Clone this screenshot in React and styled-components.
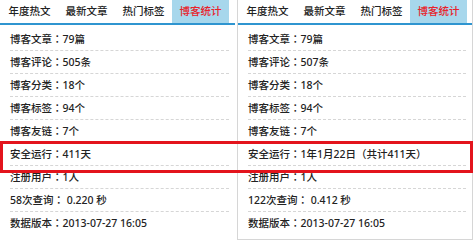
import styled, { createGlobalStyle } from 'styled-components';

const GlobalStyle = createGlobalStyle`
  html, body {
    margin: 0;
    padding: 0;
    background: #fff;
  }
  body {
    font-family: "Noto Sans", "Noto Sans CJK SC", sans-serif;
    color: #222;
  }
`;

const tabs = ['年度热文', '最新文章', '热门标签', '博客统计'];

const leftStats = [
  ['博客文章', '79篇'],
  ['博客评论', '505条'],
  ['博客分类', '18个'],
  ['博客标签', '94个'],
  ['博客友链', '7个'],
  ['安全运行', '411天'],
  ['注册用户', '1人'],
  ['58次查询', ' 0.220 秒'],
  ['数据版本', '2013-07-27 16:05'],
];

const rightStats = [
  ['博客文章', '79篇'],
  ['博客评论', '507条'],
  ['博客分类', '18个'],
  ['博客标签', '94个'],
  ['博客友链', '7个'],
  ['安全运行', '1年1月22日（共计411天）'],
  ['注册用户', '1人'],
  ['122次查询', ' 0.412 秒'],
  ['数据版本', '2013-07-27 16:05'],
];

const StatsWidget = ({ items, bordered }) => (
  <Panel $bordered={bordered}>
    <TabBar>
      {tabs.map((t, i) => (
        <Tab key={t} $active={i === tabs.length - 1}>
          {t}
        </Tab>
      ))}
    </TabBar>
    <StatList>
      {items.map(([label, value], i) => (
        <StatRow key={label} $last={i === items.length - 1}>
          {label}
          <Colon>：</Colon>
          {value}
        </StatRow>
      ))}
    </StatList>
  </Panel>
);

const App = () => {
  return (
    <Page>
      <GlobalStyle />
      <StatsWidget items={leftStats} />
      <StatsWidget items={rightStats} bordered />
      {/* red annotation frame around the uptime row */}
      <Highlight />
    </Page>
  );
};

const Page = styled.div`
  position: relative;
  width: 474px;
  height: 242px;
  overflow: hidden;
  display: flex;
  align-items: flex-start;
  gap: 2px;
`;

const Panel = styled.section`
  width: ${(p) => (p.$bordered ? '234px' : '235px')};
  border: ${(p) => (p.$bordered ? '1px solid #d6d6d6' : 'none')};
  border-top: none;
  background: #fff;
`;

const TabBar = styled.div`
  display: flex;
  height: 23px;
  padding-left: 1px;
  border-bottom: 2px solid #2f95d0;
`;

const Tab = styled.div`
  padding: 0 7.5px;
  line-height: 23px;
  font-size: 10.5px;
  font-weight: 500;
  white-space: nowrap;
  color: ${(p) => (p.$active ? '#e8232b' : '#222')};
  background: ${(p) => (p.$active ? '#a7d7ec' : 'transparent')};
`;

const StatList = styled.ul`
  list-style: none;
  margin: 0;
  padding: 3px 6px 4px 10px;
`;

const StatRow = styled.li`
  height: 22px;
  line-height: 22px;
  font-size: 10.5px;
  font-weight: 500;
  white-space: pre;
  color: #222;
  border-bottom: ${(p) => (p.$last ? '1px solid transparent' : '1px dashed #d6d6d6')};
`;

const Colon = styled.span`
  font-family: "Noto Sans CJK TC", "Noto Sans CJK SC", sans-serif;
`;

const Highlight = styled.div`
  position: absolute;
  left: 0;
  top: 141px;
  width: 473px;
  height: 32px;
  box-sizing: border-box;
  border: 3px solid #e3141d;
  pointer-events: none;
`;

export default App;
